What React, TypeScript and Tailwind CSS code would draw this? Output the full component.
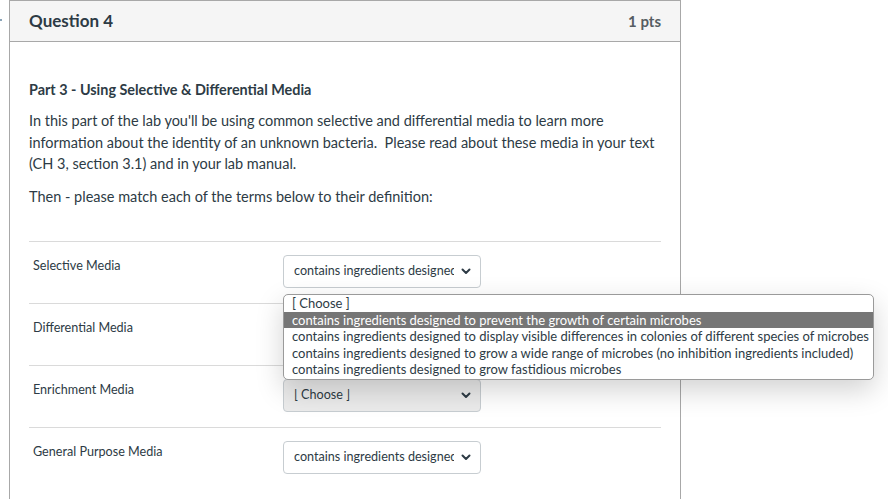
import React from "react";

const font = { fontFamily: "Lato, 'Liberation Sans', sans-serif" };

const Chevron = () => (
  <svg width="10" height="7" viewBox="0 0 10 7" className="shrink-0">
    <path d="M1.5 1.5 L5 5 L8.5 1.5" fill="none" stroke="#2d3b45" strokeWidth="2" strokeLinecap="round" strokeLinejoin="round" />
  </svg>
);

const Select = ({ value, gray = false, hidden = false }: { value: string; gray?: boolean; hidden?: boolean }) => (
  <div
    className={`w-[198px] h-[33px] rounded-[4px] border border-[#c7cdd1] flex items-center pl-[10px] ${
      gray ? "bg-[#ebebeb]" : "bg-white"
    } ${hidden ? "invisible" : ""}`}
  >
    <span className="w-[160px] overflow-hidden whitespace-nowrap text-[12.6px] text-[#2d3b45] leading-none">{value}</span>
    <span className="flex-1 flex justify-center pr-[3px]">
      <Chevron />
    </span>
  </div>
);

const rows = [
  { label: "Selective Media", value: "contains ingredients designed to prevent the growth of certain microbes" },
  { label: "Differential Media", value: "", hidden: true },
  { label: "Enrichment Media", value: "[ Choose ]", gray: true },
  { label: "General Purpose Media", value: "contains ingredients designed to grow a wide range of microbes" },
];

const options = [
  "[ Choose ]",
  "contains ingredients designed to prevent the growth of certain microbes",
  "contains ingredients designed to display visible differences in colonies of different species of microbes",
  "contains ingredients designed to grow a wide range of microbes (no inhibition ingredients included)",
  "contains ingredients designed to grow fastidious microbes",
];

export default function App() {
  return (
    <div className="relative w-[888px] h-[499px] overflow-hidden bg-white text-[#2d3b45]" style={font}>
      {/* edge marker */}
      <div className="absolute left-0 top-[19px] w-[2px] h-[2px] bg-[#8aa4b8]" />

      <div className="ml-[9px] w-[672px] h-[520px] border border-[#a8a8a8]">
        {/* Header */}
        <div className="h-[41px] bg-[#f5f5f5] border-b border-[#a8a8a8] px-[19px] flex items-center justify-between">
          <h2 className="text-[17px] font-bold text-[#2d3b45]">Question 4</h2>
          <span className="text-[15px] font-bold text-[#565d62]">1 pts</span>
        </div>

        {/* Body */}
        <div className="px-[19px] pt-[37px]">
          <p className="text-[14.4px] font-bold leading-[21px] mb-[10px]">Part 3 - Using Selective &amp; Differential Media</p>
          <p className="text-[14.5px] leading-[21.5px] mb-[11px] whitespace-pre-wrap">
            {"In this part of the lab you'll be using common selective and differential media to learn more information about the identity of an unknown bacteria.  Please read about these media in your text (CH 3, section 3.1) and in your lab manual."}
          </p>
          <p className="text-[14.5px] leading-[21.5px]">Then - please match each of the terms below to their definition:</p>

          <div className="mt-[34px]">
            {rows.map((r) => (
              <div key={r.label} className="h-[62px] border-t border-[#dadada] flex">
                <div className="w-[254px] pl-[4px] pt-[16px] text-[12.6px] leading-[16px]">{r.label}</div>
                <div className="pt-[13px]">
                  <Select value={r.value} gray={r.gray} hidden={r.hidden} />
                </div>
              </div>
            ))}
          </div>
        </div>
      </div>

      {/* Open dropdown list */}
      <div className="absolute left-[283px] top-[294px] w-[591px] h-[86px] bg-white border border-[#9a9a9a] rounded-[5px] overflow-hidden shadow-[0_10px_28px_rgba(0,0,0,0.18)]">
        {options.map((o, i) => (
          <div
            key={o}
            className={`h-[16.6px] pl-[8px] text-[13px] leading-[16.6px] whitespace-nowrap ${
              i === 1 ? "bg-[#767676] text-white" : "text-[#2d3b45]"
            }`}
          >
            {o}
          </div>
        ))}
      </div>
    </div>
  );
}
